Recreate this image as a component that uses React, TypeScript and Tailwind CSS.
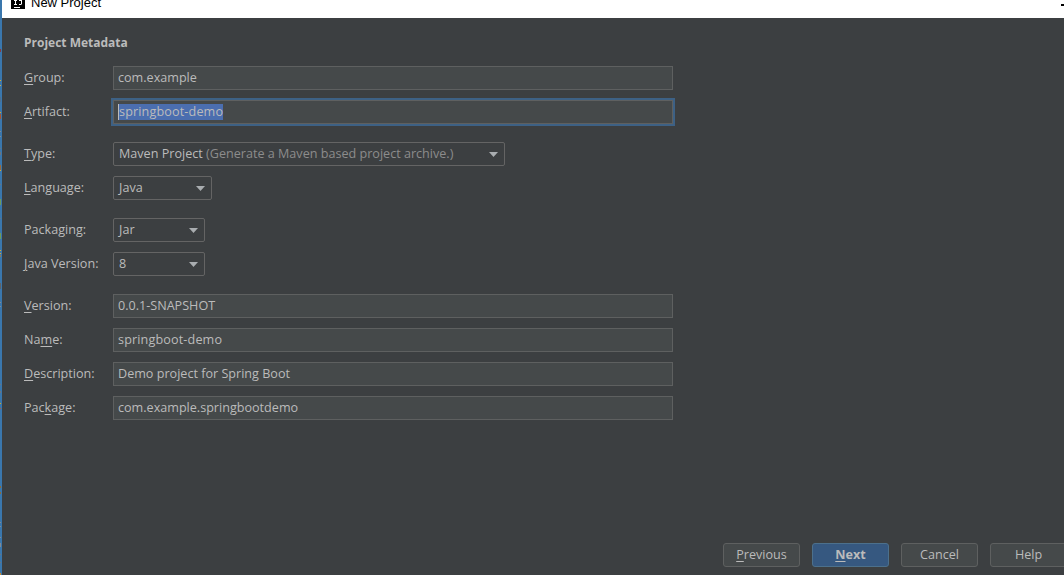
const fieldBox = "h-[24px] border border-[#5e6060] bg-[#45494a] text-[#bbbbbb] flex items-center";

// colour specks of the window behind, showing along the left edge
const edgeMarks = [
  { top: 49, h: 3, color: "#8a3b3b" },
  { top: 80, h: 1, color: "#d9a72c" },
  { top: 85, h: 1, color: "#c9a94a" },
  { top: 97, h: 5, color: "#4d6f8f" },
  { top: 112, h: 1, color: "#d9a72c" },
  { top: 114, h: 5, color: "#a8562f" },
  { top: 131, h: 1, color: "#7f8a96" },
  { top: 136, h: 1, color: "#7f8a96" },
  { top: 148, h: 1, color: "#6a7480" },
  { top: 152, h: 3, color: "#6a7480" },
  { top: 165, h: 5, color: "#9a6a3a" },
  { top: 170, h: 1, color: "#d9a72c" },
  { top: 184, h: 1, color: "#6a7480" },
  { top: 199, h: 6, color: "#6f9a5a" },
  { top: 218, h: 1, color: "#6a7480" },
  { top: 233, h: 6, color: "#6f9a5a" },
  { top: 250, h: 1, color: "#d9a72c" },
  { top: 253, h: 1, color: "#d9a72c" },
  { top: 255, h: 2, color: "#8a7a5a" },
  { top: 283, h: 6, color: "#5f6368" },
  { top: 302, h: 1, color: "#7f8a96" },
  { top: 306, h: 1, color: "#7f8a96" },
  { top: 384, h: 1, color: "#6a7480" },
  { top: 391, h: 2, color: "#6a7480" },
  { top: 403, h: 1, color: "#c9a92c" },
  { top: 408, h: 1, color: "#b5573a" },
  { top: 486, h: 2, color: "#8a6a3a" },
  { top: 492, h: 2, color: "#8a6a3a" },
  { top: 522, h: 1, color: "#7f8a96" },
  { top: 526, h: 1, color: "#7f8a96" },
  { top: 537, h: 1, color: "#7f8a96" },
  { top: 543, h: 4, color: "#7f8a96" },
  { top: 554, h: 1, color: "#6a7480" },
  { top: 562, h: 1, color: "#6a7480" },
  { top: 573, h: 2, color: "#c98a2c" },
];

function U({ children }: { children: string }) {
  return <span className="underline underline-offset-2">{children}</span>;
}

function Label({ children }: { children: React.ReactNode }) {
  return <div className="w-[89px] shrink-0 text-[#bbbbbb]">{children}</div>;
}

function TextRow({ label, value }: { label: React.ReactNode; value: React.ReactNode }) {
  return (
    <div className="flex items-center">
      <Label>{label}</Label>
      <div className={`${fieldBox} w-[560px] pl-[4px]`}>{value}</div>
    </div>
  );
}

function SelectRow({ label, width, children }: { label: React.ReactNode; width: string; children: React.ReactNode }) {
  return (
    <div className="flex items-center">
      <Label>{label}</Label>
      <div className={`${width} h-[24px] border border-[#646464] rounded-[2px] bg-[#3c3f41] flex items-center justify-between pl-[5px] pr-[6px] text-[#bbbbbb]`}>
        <span>{children}</span>
        <svg width="9" height="5" viewBox="0 0 9 5"><path d="M0 0h9L4.5 5z" fill="#a9adb0" /></svg>
      </div>
    </div>
  );
}

function FooterButton({ children, primary }: { children: React.ReactNode; primary?: boolean }) {
  return (
    <button
      type="button"
      className={`w-[77px] h-[24px] rounded-[3px] border flex items-center justify-center ${
        primary ? "border-[#4c708c] bg-[#365880] text-[#bbbbbb] font-bold" : "border-[#5e6060] bg-[#45494a] text-[#bbbbbb]"
      }`}
    >
      {children}
    </button>
  );
}

export default function App() {
  return (
    <div className="relative w-[1064px] h-[575px] overflow-hidden flex flex-col bg-[#3c3f41] text-[12.6px] leading-none font-['Open_Sans','Noto_Sans',sans-serif]">
      <div className="h-[18px] shrink-0 bg-white flex items-start overflow-hidden pl-[9px] border-l-2 border-[#3a77ad]">
        <svg className="shrink-0" width="14" height="9" viewBox="0 0 14 9">
          <rect width="14" height="9" fill="#000" />
          <path d="M3 0h3v1H5v3h1v1H3V4h1V1H3zM8 0h3v4l-1 1H8V4h2V1H8z" fill="#fff" />
          <rect x="3" y="7" width="6" height="1" fill="#fff" />
        </svg>
        <span className="ml-[6px] mt-[-5px] text-black text-[13px] leading-[15px] font-['Liberation_Sans',sans-serif]">New Project</span>
      </div>
      <div className="flex-1 flex flex-col pl-[24px]">
        <div className="mt-[19px] font-bold text-[#bbbbbb] text-[12px]">Project Metadata</div>
        <div className="mt-[17px] flex flex-col gap-[10px]">
          <TextRow label={<><U>G</U>roup:</>} value="com.example" />
          <div className="flex items-center">
            <Label><U>A</U>rtifact:</Label>
            <div className="w-[560px] h-[24px] border border-[#5e6060] bg-[#45494a] outline-2 outline-[#3d6185] text-[#bbbbbb] flex items-center pl-[4px]">
              <span className="bg-[#4b6eaf] h-[16px] flex items-center tracking-[0.14px] border-l border-[#bbbbbb]">springboot-demo</span>
            </div>
          </div>
        </div>
        <div className="mt-[18px] flex flex-col gap-[10px]">
          <SelectRow label={<><U>T</U>ype:</>} width="w-[392px]">
            Maven Project <span className="text-[#8c8c8c]">(Generate a Maven based project archive.)</span>
          </SelectRow>
          <SelectRow label={<><U>L</U>anguage:</>} width="w-[99px]">Java</SelectRow>
        </div>
        <div className="mt-[18px] flex flex-col gap-[10px]">
          <SelectRow label={<>Packa<U>g</U>ing:</>} width="w-[92px]">Jar</SelectRow>
          <SelectRow label={<><U>J</U>ava Version:</>} width="w-[92px]">8</SelectRow>
        </div>
        <div className="mt-[18px] flex flex-col gap-[10px]">
          <TextRow label={<><U>V</U>ersion:</>} value="0.0.1-SNAPSHOT" />
          <TextRow label={<>Na<U>m</U>e:</>} value={<span className="tracking-[0.14px]">springboot-demo</span>} />
          <TextRow label={<><U>D</U>escription:</>} value="Demo project for Spring Boot" />
          <TextRow label={<>Pac<U>k</U>age:</>} value="com.example.springbootdemo" />
        </div>
        <div className="mt-auto mb-[8px] flex justify-end gap-[12px] w-[1043px]">
          <FooterButton><U>P</U>revious</FooterButton>
          <FooterButton primary><U>N</U>ext</FooterButton>
          <FooterButton>Cancel</FooterButton>
          <FooterButton>Help</FooterButton>
        </div>
      </div>
      {/* window edge over the page */}
      <div className="absolute left-0 top-0 bottom-0 w-[2px] bg-[#3a77ad]">
        {edgeMarks.map((m) => (
          <div
            key={m.top}
            className="absolute left-0 w-[1px]"
            style={{ top: m.top, height: m.h, backgroundColor: m.color }}
          />
        ))}
      </div>
      <div className="absolute right-0 top-[4px] w-[3px] h-[2px] bg-black" />
    </div>
  );
}
